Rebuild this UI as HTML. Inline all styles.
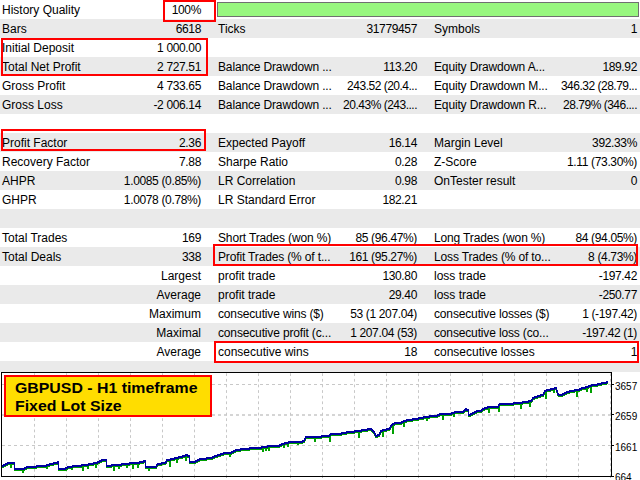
<!DOCTYPE html>
<html><head><meta charset="utf-8"><style>
html,body{margin:0;padding:0;width:640px;height:480px;overflow:hidden;background:#fff}
body{position:relative;font-family:"Liberation Sans",sans-serif;color:#000}
.bg{position:absolute;left:0;width:640px;background:#eaeaea}
.t{position:absolute;height:19px;line-height:19px;font-size:12px;white-space:pre}
.r{text-align:right}
.v{letter-spacing:-0.35px}
.ve{letter-spacing:-0.5px}
.lp{letter-spacing:-0.15px}
.rb{position:absolute;border:2px solid #ff0000}
.ax{position:absolute;left:615px;font-size:10px;line-height:12px;white-space:pre}
.yb{position:absolute;left:4px;top:375px;width:204px;height:38px;border:2px solid #ff0000;background:#ffdd00}
.yb div{position:absolute;left:8.6px;font-weight:bold;font-size:14px;line-height:16px;white-space:pre;transform:scaleX(1.133);transform-origin:0 0}
</style></head><body>
<div class="bg" style="top:19px;height:19px"></div>
<div class="bg" style="top:57px;height:19px"></div>
<div class="bg" style="top:95px;height:19px"></div>
<div class="bg" style="top:133px;height:19px"></div>
<div class="bg" style="top:171px;height:19px"></div>
<div class="bg" style="top:209px;height:19px"></div>
<div class="bg" style="top:247px;height:19px"></div>
<div class="bg" style="top:285px;height:19px"></div>
<div class="bg" style="top:323px;height:19px"></div>
<div class="bg" style="top:361px;height:11px"></div>
<div class="t" style="top:1px;left:2px">History Quality</div>
<div class="t r v" style="top:1px;right:439px">100%</div>
<div class="t" style="top:20px;left:2px">Bars</div>
<div class="t r v" style="top:20px;right:439px">6618</div>
<div class="t" style="top:20px;left:218px">Ticks</div>
<div class="t r v" style="top:20px;right:223px">31779457</div>
<div class="t" style="top:20px;left:434px">Symbols</div>
<div class="t r v" style="top:20px;right:3px">1</div>
<div class="t" style="top:39px;left:2px">Initial Deposit</div>
<div class="t r v" style="top:39px;right:439px">1 000.00</div>
<div class="t" style="top:58px;left:2px">Total Net Profit</div>
<div class="t r v" style="top:58px;right:439px">2 727.51</div>
<div class="t lp" style="top:58px;left:218px">Balance Drawdown ...</div>
<div class="t r v" style="top:58px;right:223px">113.20</div>
<div class="t lp" style="top:58px;left:434px">Equity Drawdown A...</div>
<div class="t r v" style="top:58px;right:3px">189.92</div>
<div class="t" style="top:77px;left:2px">Gross Profit</div>
<div class="t r v" style="top:77px;right:439px">4 733.65</div>
<div class="t lp" style="top:77px;left:218px">Balance Drawdown ...</div>
<div class="t r v ve" style="top:77px;right:223px">243.52 (20.4...</div>
<div class="t lp" style="top:77px;left:434px">Equity Drawdown M...</div>
<div class="t r v ve" style="top:77px;right:3px">346.32 (28.79...</div>
<div class="t" style="top:96px;left:2px">Gross Loss</div>
<div class="t r v" style="top:96px;right:439px">-2 006.14</div>
<div class="t lp" style="top:96px;left:218px">Balance Drawdown ...</div>
<div class="t r v ve" style="top:96px;right:223px">20.43% (243....</div>
<div class="t lp" style="top:96px;left:434px">Equity Drawdown R...</div>
<div class="t r v ve" style="top:96px;right:3px">28.79% (346....</div>
<div class="t" style="top:134px;left:2px">Profit Factor</div>
<div class="t r v" style="top:134px;right:439px">2.36</div>
<div class="t" style="top:134px;left:218px">Expected Payoff</div>
<div class="t r v" style="top:134px;right:223px">16.14</div>
<div class="t" style="top:134px;left:434px">Margin Level</div>
<div class="t r v" style="top:134px;right:3px">392.33%</div>
<div class="t" style="top:153px;left:2px">Recovery Factor</div>
<div class="t r v" style="top:153px;right:439px">7.88</div>
<div class="t" style="top:153px;left:218px">Sharpe Ratio</div>
<div class="t r v" style="top:153px;right:223px">0.28</div>
<div class="t" style="top:153px;left:434px">Z-Score</div>
<div class="t r v" style="top:153px;right:3px">1.11 (73.30%)</div>
<div class="t" style="top:172px;left:2px">AHPR</div>
<div class="t r v" style="top:172px;right:439px">1.0085 (0.85%)</div>
<div class="t" style="top:172px;left:218px">LR Correlation</div>
<div class="t r v" style="top:172px;right:223px">0.98</div>
<div class="t" style="top:172px;left:434px">OnTester result</div>
<div class="t r v" style="top:172px;right:3px">0</div>
<div class="t" style="top:191px;left:2px">GHPR</div>
<div class="t r v" style="top:191px;right:439px">1.0078 (0.78%)</div>
<div class="t" style="top:191px;left:218px">LR Standard Error</div>
<div class="t r v" style="top:191px;right:223px">182.21</div>
<div class="t" style="top:229px;left:2px">Total Trades</div>
<div class="t r v" style="top:229px;right:439px">169</div>
<div class="t lp" style="top:229px;left:218px">Short Trades (won %)</div>
<div class="t r v" style="top:229px;right:223px">85 (96.47%)</div>
<div class="t lp" style="top:229px;left:434px">Long Trades (won %)</div>
<div class="t r v" style="top:229px;right:3px">84 (94.05%)</div>
<div class="t" style="top:248px;left:2px">Total Deals</div>
<div class="t r v" style="top:248px;right:439px">338</div>
<div class="t lp" style="top:248px;left:218px">Profit Trades (% of t...</div>
<div class="t r v" style="top:248px;right:223px">161 (95.27%)</div>
<div class="t lp" style="top:248px;left:434px">Loss Trades (% of to...</div>
<div class="t r v" style="top:248px;right:3px">8 (4.73%)</div>
<div class="t r" style="top:267px;right:439px">Largest</div>
<div class="t" style="top:267px;left:218px">profit trade</div>
<div class="t r v" style="top:267px;right:223px">130.80</div>
<div class="t" style="top:267px;left:434px">loss trade</div>
<div class="t r v" style="top:267px;right:3px">-197.42</div>
<div class="t r" style="top:286px;right:439px">Average</div>
<div class="t" style="top:286px;left:218px">profit trade</div>
<div class="t r v" style="top:286px;right:223px">29.40</div>
<div class="t" style="top:286px;left:434px">loss trade</div>
<div class="t r v" style="top:286px;right:3px">-250.77</div>
<div class="t r" style="top:305px;right:439px">Maximum</div>
<div class="t lp" style="top:305px;left:218px">consecutive wins ($)</div>
<div class="t r v" style="top:305px;right:223px">53 (1 207.04)</div>
<div class="t lp" style="top:305px;left:434px">consecutive losses ($)</div>
<div class="t r v" style="top:305px;right:3px">1 (-197.42)</div>
<div class="t r" style="top:324px;right:439px">Maximal</div>
<div class="t lp" style="top:324px;left:218px">consecutive profit (c...</div>
<div class="t r v" style="top:324px;right:223px">1 207.04 (53)</div>
<div class="t lp" style="top:324px;left:434px">consecutive loss (co...</div>
<div class="t r v" style="top:324px;right:3px">-197.42 (1)</div>
<div class="t r" style="top:343px;right:439px">Average</div>
<div class="t" style="top:343px;left:218px">consecutive wins</div>
<div class="t r v" style="top:343px;right:223px">18</div>
<div class="t" style="top:343px;left:434px">consecutive losses</div>
<div class="t r v" style="top:343px;right:3px">1</div>
<div style="position:absolute;left:217px;top:2px;width:420px;height:13px;border:1px solid #707070;background:#98f77f"></div>
<div class="rb" style="left:163px;top:0px;width:49px;height:18px"></div>
<div class="rb" style="left:1px;top:38px;width:203px;height:34px"></div>
<div class="rb" style="left:1px;top:129px;width:201px;height:18px"></div>
<div class="rb" style="left:213px;top:244px;width:421px;height:18px"></div>
<div class="rb" style="left:214px;top:341px;width:421px;height:18px"></div>
<svg width="640" height="480" style="position:absolute;left:0;top:0" shape-rendering="crispEdges"><rect x="1" y="372" width="611" height="105" fill="#fff"/><path d="M34.5 373.25V476 M66.5 373.25V476 M98.5 373.25V476 M130.5 373.25V476 M162.5 373.25V476 M194.5 373.25V476 M226.5 373.25V476 M258.5 373.25V476 M290.5 373.25V476 M322.5 373.25V476 M354.5 373.25V476 M386.5 373.25V476 M418.5 373.25V476 M450.5 373.25V476 M482.5 373.25V476 M514.5 373.25V476 M546.5 373.25V476 M578.5 373.25V476 M610.5 373.25V476" stroke="#c8c8c8" stroke-width="1" stroke-dasharray="2.8 2.825" fill="none" shape-rendering="auto"/><path d="M2 384.5H611 M2 445.5H611" stroke="#c8c8c8" stroke-width="1" stroke-dasharray="3 3" fill="none"/><path d="M2 415H611" stroke="#c8c8c8" stroke-width="1.6" stroke-dasharray="3 3" fill="none" shape-rendering="geometricPrecision"/><path d="M2 467h1v1h-1zM3 467h1v1h-1zM4 466h1v1h-1zM5 466h1v1h-1zM6 465h1v1h-1zM7 465h1v1h-1zM8 464h1v1h-1zM9 464h1v1h-1zM10 464h1v4h-1zM11 464h1v4h-1zM12 464h1v1h-1zM13 464h1v1h-1zM14 470h1v1h-1zM15 470h1v1h-1zM16 470h1v1h-1zM17 470h1v1h-1zM18 470h1v1h-1zM19 470h1v1h-1zM20 470h1v1h-1zM21 470h1v1h-1zM22 470h1v3h-1zM23 470h1v3h-1zM24 470h1v1h-1zM25 469h1v1h-1zM26 469h1v1h-1zM27 468h1v1h-1zM28 468h1v1h-1zM29 468h1v1h-1zM30 468h1v1h-1zM31 468h1v1h-1zM32 468h1v1h-1zM33 468h1v1h-1zM34 468h1v1h-1zM35 468h1v1h-1zM36 468h1v1h-1zM37 467h1v1h-1zM38 467h1v1h-1zM39 467h1v1h-1zM40 467h1v1h-1zM41 467h1v1h-1zM42 467h1v1h-1zM43 467h1v1h-1zM44 467h1v1h-1zM45 467h1v1h-1zM46 467h1v2h-1zM47 466h1v3h-1zM48 466h1v1h-1zM49 466h1v1h-1zM50 465h1v1h-1zM51 465h1v1h-1zM52 465h1v1h-1zM53 465h1v1h-1zM54 464h1v1h-1zM55 464h1v1h-1zM56 464h1v1h-1zM57 464h1v1h-1zM58 470h1v1h-1zM59 470h1v1h-1zM60 470h1v1h-1zM61 470h1v1h-1zM62 470h1v1h-1zM63 470h1v1h-1zM64 470h1v1h-1zM65 470h1v1h-1zM66 469h1v2h-1zM67 469h1v1h-1zM68 468h1v1h-1zM69 468h1v1h-1zM70 468h1v1h-1zM71 468h1v2h-1zM72 468h1v2h-1zM73 467h1v1h-1zM74 467h1v1h-1zM75 467h1v1h-1zM76 467h1v1h-1zM77 467h1v1h-1zM78 467h1v1h-1zM79 467h1v1h-1zM80 467h1v1h-1zM81 467h1v1h-1zM82 466h1v5h-1zM83 466h1v5h-1zM84 466h1v1h-1zM85 466h1v1h-1zM86 466h1v1h-1zM87 466h1v3h-1zM88 466h1v3h-1zM89 465h1v1h-1zM90 465h1v1h-1zM91 465h1v1h-1zM92 465h1v1h-1zM93 465h1v1h-1zM94 464h1v1h-1zM95 464h1v4h-1zM96 464h1v4h-1zM97 464h1v1h-1zM98 463h1v1h-1zM99 463h1v1h-1zM100 462h1v1h-1zM101 462h1v1h-1zM102 461h1v1h-1zM103 461h1v1h-1zM104 461h1v1h-1zM105 461h1v1h-1zM106 467h1v1h-1zM107 467h1v1h-1zM108 467h1v1h-1zM109 467h1v1h-1zM110 467h1v1h-1zM111 467h1v1h-1zM112 466h1v1h-1zM113 466h1v5h-1zM114 466h1v5h-1zM115 466h1v1h-1zM116 466h1v1h-1zM117 466h1v1h-1zM118 466h1v3h-1zM119 466h1v3h-1zM120 466h1v1h-1zM121 466h1v1h-1zM122 465h1v1h-1zM123 465h1v1h-1zM124 465h1v1h-1zM125 465h1v1h-1zM126 465h1v3h-1zM127 465h1v3h-1zM128 465h1v1h-1zM129 465h1v1h-1zM130 464h1v1h-1zM131 464h1v1h-1zM132 464h1v5h-1zM133 464h1v5h-1zM134 464h1v1h-1zM135 464h1v1h-1zM136 464h1v1h-1zM137 464h1v4h-1zM138 464h1v4h-1zM139 464h1v1h-1zM140 463h1v1h-1zM141 463h1v1h-1zM142 463h1v1h-1zM143 463h1v1h-1zM144 462h1v1h-1zM145 468h1v1h-1zM146 468h1v1h-1zM147 468h1v1h-1zM148 468h1v3h-1zM149 468h1v3h-1zM150 468h1v1h-1zM151 468h1v1h-1zM152 468h1v1h-1zM153 468h1v1h-1zM154 468h1v1h-1zM155 468h1v1h-1zM156 468h1v1h-1zM157 466h1v1h-1zM158 465h1v1h-1zM159 465h1v1h-1zM160 465h1v1h-1zM161 465h1v1h-1zM162 464h1v1h-1zM163 464h1v1h-1zM164 464h1v1h-1zM165 464h1v1h-1zM166 463h1v1h-1zM167 461h1v1h-1zM168 461h1v1h-1zM169 461h1v6h-1zM170 461h1v6h-1zM171 460h1v1h-1zM172 460h1v1h-1zM173 460h1v1h-1zM174 460h1v1h-1zM175 459h1v1h-1zM176 459h1v4h-1zM177 459h1v4h-1zM178 459h1v1h-1zM179 458h1v1h-1zM180 458h1v1h-1zM181 458h1v1h-1zM182 458h1v1h-1zM183 457h1v1h-1zM184 457h1v1h-1zM185 457h1v4h-1zM186 456h1v5h-1zM187 457h1v1h-1zM188 457h1v1h-1zM189 463h1v1h-1zM190 463h1v1h-1zM191 463h1v1h-1zM192 463h1v1h-1zM193 463h1v1h-1zM194 463h1v1h-1zM195 463h1v1h-1zM196 462h1v1h-1zM197 462h1v1h-1zM198 461h1v1h-1zM199 461h1v1h-1zM200 460h1v1h-1zM201 460h1v1h-1zM202 460h1v1h-1zM203 460h1v1h-1zM204 460h1v1h-1zM205 460h1v1h-1zM206 460h1v1h-1zM207 459h1v1h-1zM208 459h1v1h-1zM209 459h1v1h-1zM210 459h1v1h-1zM211 459h1v1h-1zM212 459h1v1h-1zM213 458h1v1h-1zM214 458h1v1h-1zM215 457h1v1h-1zM216 457h1v1h-1zM217 457h1v1h-1zM218 456h1v1h-1zM219 456h1v1h-1zM220 456h1v1h-1zM221 455h1v1h-1zM222 455h1v1h-1zM223 455h1v1h-1zM224 454h1v1h-1zM225 454h1v1h-1zM226 454h1v1h-1zM227 454h1v1h-1zM228 454h1v1h-1zM229 454h1v3h-1zM230 454h1v3h-1zM231 454h1v1h-1zM232 453h1v1h-1zM233 453h1v1h-1zM234 452h1v1h-1zM235 452h1v1h-1zM236 451h1v1h-1zM237 451h1v1h-1zM238 451h1v1h-1zM239 451h1v1h-1zM240 451h1v1h-1zM241 450h1v1h-1zM242 450h1v1h-1zM243 450h1v1h-1zM244 450h1v1h-1zM245 450h1v1h-1zM246 450h1v1h-1zM247 450h1v1h-1zM248 450h1v1h-1zM249 450h1v1h-1zM250 449h1v1h-1zM251 449h1v1h-1zM252 449h1v1h-1zM253 449h1v1h-1zM254 449h1v1h-1zM255 449h1v1h-1zM256 449h1v1h-1zM257 449h1v1h-1zM258 449h1v1h-1zM259 449h1v1h-1zM260 449h1v1h-1zM261 449h1v1h-1zM262 448h1v4h-1zM263 448h1v4h-1zM264 448h1v1h-1zM265 448h1v3h-1zM266 448h1v3h-1zM267 448h1v1h-1zM268 447h1v4h-1zM269 447h1v4h-1zM270 447h1v1h-1zM271 447h1v1h-1zM272 447h1v1h-1zM273 447h1v1h-1zM274 447h1v1h-1zM275 447h1v1h-1zM276 447h1v1h-1zM277 447h1v1h-1zM278 447h1v1h-1zM279 447h1v1h-1zM280 446h1v1h-1zM281 446h1v1h-1zM282 445h1v1h-1zM283 445h1v3h-1zM284 445h1v3h-1zM285 444h1v1h-1zM286 444h1v1h-1zM287 444h1v3h-1zM288 444h1v3h-1zM289 443h1v1h-1zM290 443h1v1h-1zM291 443h1v1h-1zM292 443h1v1h-1zM293 443h1v1h-1zM294 443h1v1h-1zM295 443h1v1h-1zM296 443h1v1h-1zM297 443h1v2h-1zM298 443h1v2h-1zM299 443h1v1h-1zM300 443h1v1h-1zM301 443h1v1h-1zM302 443h1v1h-1zM303 442h1v1h-1zM304 442h1v1h-1zM305 440h1v1h-1zM306 438h1v1h-1zM307 438h1v1h-1zM308 438h1v1h-1zM309 438h1v1h-1zM310 438h1v1h-1zM311 438h1v1h-1zM312 438h1v1h-1zM313 438h1v1h-1zM314 438h1v4h-1zM315 438h1v4h-1zM316 438h1v1h-1zM317 438h1v1h-1zM318 438h1v1h-1zM319 438h1v1h-1zM320 438h1v1h-1zM321 438h1v1h-1zM322 437h1v1h-1zM323 437h1v1h-1zM324 437h1v1h-1zM325 437h1v1h-1zM326 437h1v1h-1zM327 437h1v1h-1zM328 437h1v1h-1zM329 437h1v5h-1zM330 436h1v6h-1zM331 435h1v1h-1zM332 435h1v1h-1zM333 435h1v1h-1zM334 435h1v1h-1zM335 435h1v1h-1zM336 435h1v1h-1zM337 435h1v1h-1zM338 435h1v1h-1zM339 435h1v1h-1zM340 435h1v1h-1zM341 435h1v1h-1zM342 434h1v1h-1zM343 434h1v1h-1zM344 434h1v1h-1zM345 434h1v1h-1zM346 434h1v1h-1zM347 433h1v1h-1zM348 433h1v1h-1zM349 433h1v1h-1zM350 433h1v1h-1zM351 433h1v1h-1zM352 433h1v1h-1zM353 433h1v1h-1zM354 433h1v1h-1zM355 432h1v1h-1zM356 432h1v1h-1zM357 432h1v1h-1zM358 432h1v6h-1zM359 432h1v6h-1zM360 432h1v1h-1zM361 432h1v1h-1zM362 431h1v1h-1zM363 431h1v1h-1zM364 431h1v1h-1zM365 431h1v1h-1zM366 431h1v1h-1zM367 431h1v1h-1zM368 430h1v1h-1zM369 430h1v1h-1zM370 430h1v1h-1zM371 431h1v1h-1zM372 432h1v1h-1zM373 433h1v1h-1zM374 435h1v1h-1zM375 437h1v1h-1zM376 437h1v1h-1zM377 437h1v1h-1zM378 436h1v1h-1zM379 436h1v1h-1zM380 434h1v1h-1zM381 432h1v1h-1zM382 432h1v5h-1zM383 431h1v6h-1zM384 431h1v1h-1zM385 431h1v1h-1zM386 431h1v1h-1zM387 430h1v1h-1zM388 430h1v1h-1zM389 430h1v1h-1zM390 429h1v1h-1zM391 427h1v1h-1zM392 426h1v8h-1zM393 425h1v9h-1zM394 425h1v1h-1zM395 424h1v1h-1zM396 424h1v1h-1zM397 424h1v1h-1zM398 424h1v1h-1zM399 424h1v1h-1zM400 424h1v1h-1zM401 424h1v1h-1zM402 423h1v1h-1zM403 423h1v4h-1zM404 422h1v5h-1zM405 422h1v1h-1zM406 422h1v1h-1zM407 421h1v1h-1zM408 421h1v1h-1zM409 421h1v1h-1zM410 421h1v1h-1zM411 421h1v1h-1zM412 421h1v1h-1zM413 420h1v1h-1zM414 420h1v1h-1zM415 420h1v1h-1zM416 420h1v1h-1zM417 420h1v1h-1zM418 420h1v1h-1zM419 419h1v1h-1zM420 419h1v1h-1zM421 419h1v1h-1zM422 419h1v1h-1zM423 419h1v1h-1zM424 418h1v1h-1zM425 418h1v1h-1zM426 418h1v3h-1zM427 418h1v3h-1zM428 418h1v1h-1zM429 418h1v1h-1zM430 417h1v1h-1zM431 417h1v1h-1zM432 417h1v1h-1zM433 417h1v1h-1zM434 417h1v1h-1zM435 417h1v1h-1zM436 417h1v1h-1zM437 417h1v1h-1zM438 416h1v1h-1zM439 416h1v1h-1zM440 415h1v1h-1zM441 415h1v1h-1zM442 415h1v5h-1zM443 415h1v5h-1zM444 415h1v1h-1zM445 415h1v1h-1zM446 415h1v1h-1zM447 415h1v1h-1zM448 415h1v1h-1zM449 415h1v1h-1zM450 415h1v1h-1zM451 415h1v1h-1zM452 414h1v1h-1zM453 414h1v3h-1zM454 414h1v3h-1zM455 413h1v1h-1zM456 413h1v1h-1zM457 413h1v1h-1zM458 413h1v1h-1zM459 413h1v1h-1zM460 413h1v1h-1zM461 413h1v1h-1zM462 413h1v1h-1zM463 413h1v1h-1zM464 412h1v1h-1zM465 411h1v1h-1zM466 411h1v1h-1zM467 411h1v1h-1zM468 416h1v1h-1zM469 416h1v1h-1zM470 416h1v1h-1zM471 415h1v1h-1zM472 415h1v1h-1zM473 414h1v1h-1zM474 414h1v1h-1zM475 413h1v1h-1zM476 413h1v1h-1zM477 412h1v1h-1zM478 412h1v1h-1zM479 412h1v1h-1zM480 412h1v1h-1zM481 412h1v1h-1zM482 411h1v1h-1zM483 410h1v1h-1zM484 410h1v1h-1zM485 409h1v1h-1zM486 409h1v1h-1zM487 409h1v1h-1zM488 408h1v5h-1zM489 408h1v5h-1zM490 408h1v1h-1zM491 408h1v1h-1zM492 408h1v1h-1zM493 408h1v1h-1zM494 408h1v1h-1zM495 408h1v1h-1zM496 408h1v1h-1zM497 408h1v1h-1zM498 408h1v4h-1zM499 406h1v6h-1zM500 405h1v1h-1zM501 405h1v1h-1zM502 405h1v1h-1zM503 405h1v1h-1zM504 405h1v1h-1zM505 405h1v1h-1zM506 405h1v1h-1zM507 405h1v1h-1zM508 405h1v1h-1zM509 405h1v1h-1zM510 405h1v1h-1zM511 405h1v1h-1zM512 405h1v1h-1zM513 405h1v1h-1zM514 404h1v1h-1zM515 404h1v1h-1zM516 404h1v1h-1zM517 404h1v1h-1zM518 404h1v1h-1zM519 404h1v1h-1zM520 404h1v5h-1zM521 404h1v5h-1zM522 404h1v1h-1zM523 403h1v1h-1zM524 403h1v1h-1zM525 403h1v1h-1zM526 403h1v1h-1zM527 403h1v1h-1zM528 403h1v1h-1zM529 402h1v5h-1zM530 402h1v5h-1zM531 402h1v1h-1zM532 401h1v1h-1zM533 399h1v1h-1zM534 399h1v1h-1zM535 398h1v1h-1zM536 398h1v1h-1zM537 398h1v1h-1zM538 397h1v1h-1zM539 397h1v1h-1zM540 397h1v1h-1zM541 396h1v1h-1zM542 396h1v1h-1zM543 396h1v1h-1zM544 394h1v1h-1zM545 392h1v7h-1zM546 392h1v7h-1zM547 391h1v1h-1zM548 391h1v1h-1zM549 391h1v1h-1zM550 391h1v1h-1zM551 390h1v1h-1zM552 390h1v1h-1zM553 390h1v3h-1zM554 390h1v3h-1zM555 389h1v1h-1zM556 392h1v1h-1zM557 395h1v1h-1zM558 396h1v1h-1zM559 396h1v1h-1zM560 396h1v1h-1zM561 396h1v1h-1zM562 396h1v1h-1zM563 395h1v1h-1zM564 395h1v1h-1zM565 394h1v1h-1zM566 394h1v1h-1zM567 393h1v1h-1zM568 393h1v1h-1zM569 393h1v1h-1zM570 392h1v1h-1zM571 392h1v1h-1zM572 392h1v1h-1zM573 392h1v1h-1zM574 392h1v1h-1zM575 391h1v1h-1zM576 391h1v6h-1zM577 391h1v6h-1zM578 391h1v1h-1zM579 391h1v1h-1zM580 390h1v1h-1zM581 390h1v1h-1zM582 389h1v1h-1zM583 389h1v1h-1zM584 389h1v1h-1zM585 389h1v1h-1zM586 388h1v4h-1zM587 388h1v4h-1zM588 388h1v1h-1zM589 387h1v1h-1zM590 387h1v6h-1zM591 387h1v6h-1zM592 386h1v1h-1zM593 386h1v1h-1zM594 386h1v1h-1zM595 386h1v1h-1zM596 386h1v1h-1zM597 386h1v1h-1zM598 385h1v1h-1zM599 385h1v1h-1zM600 385h1v1h-1zM601 385h1v1h-1zM602 384h1v1h-1zM603 384h1v1h-1zM604 384h1v1h-1zM605 384h1v1h-1zM606 384h1v1h-1zM607 383h1v1h-1z" fill="#00a000"/><path d="M2 465h1v2h-1zM3 464h1v3h-1zM4 464h1v2h-1zM5 463h1v3h-1zM6 463h1v2h-1zM7 462h1v3h-1zM8 462h1v2h-1zM9 462h1v2h-1zM10 462h1v2h-1zM11 462h1v2h-1zM12 462h1v2h-1zM13 462h1v2h-1zM14 462h1v8h-1zM15 468h1v2h-1zM16 468h1v2h-1zM17 468h1v2h-1zM18 468h1v2h-1zM19 468h1v2h-1zM20 468h1v2h-1zM21 468h1v2h-1zM22 468h1v2h-1zM23 468h1v2h-1zM24 467h1v3h-1zM25 467h1v2h-1zM26 466h1v3h-1zM27 466h1v2h-1zM28 466h1v2h-1zM29 466h1v2h-1zM30 466h1v2h-1zM31 466h1v2h-1zM32 466h1v2h-1zM33 466h1v2h-1zM34 466h1v2h-1zM35 466h1v2h-1zM36 465h1v3h-1zM37 465h1v2h-1zM38 465h1v2h-1zM39 465h1v2h-1zM40 465h1v2h-1zM41 465h1v2h-1zM42 465h1v2h-1zM43 465h1v2h-1zM44 465h1v2h-1zM45 465h1v2h-1zM46 464h1v3h-1zM47 464h1v2h-1zM48 464h1v2h-1zM49 463h1v3h-1zM50 463h1v2h-1zM51 463h1v2h-1zM52 463h1v2h-1zM53 462h1v3h-1zM54 462h1v2h-1zM55 462h1v2h-1zM56 462h1v2h-1zM57 461h1v3h-1zM58 461h1v9h-1zM59 468h1v2h-1zM60 468h1v2h-1zM61 468h1v2h-1zM62 468h1v2h-1zM63 468h1v2h-1zM64 468h1v2h-1zM65 467h1v3h-1zM66 467h1v2h-1zM67 466h1v3h-1zM68 466h1v2h-1zM69 466h1v2h-1zM70 466h1v2h-1zM71 466h1v2h-1zM72 465h1v3h-1zM73 465h1v2h-1zM74 465h1v2h-1zM75 465h1v2h-1zM76 465h1v2h-1zM77 465h1v2h-1zM78 465h1v2h-1zM79 465h1v2h-1zM80 465h1v2h-1zM81 464h1v3h-1zM82 464h1v2h-1zM83 464h1v2h-1zM84 464h1v2h-1zM85 464h1v2h-1zM86 464h1v2h-1zM87 464h1v2h-1zM88 463h1v3h-1zM89 463h1v2h-1zM90 463h1v2h-1zM91 463h1v2h-1zM92 463h1v2h-1zM93 462h1v3h-1zM94 462h1v2h-1zM95 462h1v2h-1zM96 462h1v2h-1zM97 461h1v3h-1zM98 461h1v2h-1zM99 460h1v3h-1zM100 460h1v2h-1zM101 459h1v3h-1zM102 459h1v2h-1zM103 459h1v2h-1zM104 459h1v2h-1zM105 459h1v2h-1zM106 459h1v8h-1zM107 465h1v2h-1zM108 465h1v2h-1zM109 465h1v2h-1zM110 465h1v2h-1zM111 464h1v3h-1zM112 464h1v2h-1zM113 464h1v2h-1zM114 464h1v2h-1zM115 464h1v2h-1zM116 464h1v2h-1zM117 464h1v2h-1zM118 464h1v2h-1zM119 464h1v2h-1zM120 464h1v2h-1zM121 463h1v3h-1zM122 463h1v2h-1zM123 463h1v2h-1zM124 463h1v2h-1zM125 463h1v2h-1zM126 463h1v2h-1zM127 463h1v2h-1zM128 463h1v2h-1zM129 462h1v3h-1zM130 462h1v2h-1zM131 462h1v2h-1zM132 462h1v2h-1zM133 462h1v2h-1zM134 462h1v2h-1zM135 462h1v2h-1zM136 462h1v2h-1zM137 462h1v2h-1zM138 462h1v2h-1zM139 461h1v3h-1zM140 461h1v2h-1zM141 461h1v2h-1zM142 461h1v2h-1zM143 460h1v3h-1zM144 460h1v2h-1zM145 460h1v8h-1zM146 466h1v2h-1zM147 466h1v2h-1zM148 466h1v2h-1zM149 466h1v2h-1zM150 466h1v2h-1zM151 466h1v2h-1zM152 466h1v2h-1zM153 466h1v2h-1zM154 466h1v2h-1zM155 466h1v2h-1zM156 464h1v4h-1zM157 463h1v3h-1zM158 463h1v2h-1zM159 463h1v2h-1zM160 463h1v2h-1zM161 462h1v3h-1zM162 462h1v2h-1zM163 462h1v2h-1zM164 462h1v2h-1zM165 461h1v3h-1zM166 459h1v4h-1zM167 459h1v2h-1zM168 459h1v2h-1zM169 459h1v2h-1zM170 458h1v3h-1zM171 458h1v2h-1zM172 458h1v2h-1zM173 458h1v2h-1zM174 457h1v3h-1zM175 457h1v2h-1zM176 457h1v2h-1zM177 457h1v2h-1zM178 456h1v3h-1zM179 456h1v2h-1zM180 456h1v2h-1zM181 456h1v2h-1zM182 455h1v3h-1zM183 455h1v2h-1zM184 455h1v2h-1zM185 454h1v3h-1zM186 454h1v2h-1zM187 454h1v3h-1zM188 455h1v2h-1zM189 455h1v8h-1zM190 461h1v2h-1zM191 461h1v2h-1zM192 461h1v2h-1zM193 461h1v2h-1zM194 461h1v2h-1zM195 460h1v3h-1zM196 460h1v2h-1zM197 459h1v3h-1zM198 459h1v2h-1zM199 458h1v3h-1zM200 458h1v2h-1zM201 458h1v2h-1zM202 458h1v2h-1zM203 458h1v2h-1zM204 458h1v2h-1zM205 458h1v2h-1zM206 457h1v3h-1zM207 457h1v2h-1zM208 457h1v2h-1zM209 457h1v2h-1zM210 457h1v2h-1zM211 457h1v2h-1zM212 456h1v3h-1zM213 456h1v2h-1zM214 455h1v3h-1zM215 455h1v2h-1zM216 455h1v2h-1zM217 454h1v3h-1zM218 454h1v2h-1zM219 454h1v2h-1zM220 453h1v3h-1zM221 453h1v2h-1zM222 453h1v2h-1zM223 452h1v3h-1zM224 452h1v2h-1zM225 452h1v2h-1zM226 452h1v2h-1zM227 452h1v2h-1zM228 452h1v2h-1zM229 452h1v2h-1zM230 452h1v2h-1zM231 451h1v3h-1zM232 451h1v2h-1zM233 450h1v3h-1zM234 450h1v2h-1zM235 449h1v3h-1zM236 449h1v2h-1zM237 449h1v2h-1zM238 449h1v2h-1zM239 449h1v2h-1zM240 448h1v3h-1zM241 448h1v2h-1zM242 448h1v2h-1zM243 448h1v2h-1zM244 448h1v2h-1zM245 448h1v2h-1zM246 448h1v2h-1zM247 448h1v2h-1zM248 448h1v2h-1zM249 447h1v3h-1zM250 447h1v2h-1zM251 447h1v2h-1zM252 447h1v2h-1zM253 447h1v2h-1zM254 447h1v2h-1zM255 447h1v2h-1zM256 447h1v2h-1zM257 447h1v2h-1zM258 447h1v2h-1zM259 447h1v2h-1zM260 447h1v2h-1zM261 446h1v3h-1zM262 446h1v2h-1zM263 446h1v2h-1zM264 446h1v2h-1zM265 446h1v2h-1zM266 446h1v2h-1zM267 445h1v3h-1zM268 445h1v2h-1zM269 445h1v2h-1zM270 445h1v2h-1zM271 445h1v2h-1zM272 445h1v2h-1zM273 445h1v2h-1zM274 445h1v2h-1zM275 445h1v2h-1zM276 445h1v2h-1zM277 445h1v2h-1zM278 445h1v2h-1zM279 444h1v3h-1zM280 444h1v2h-1zM281 443h1v3h-1zM282 443h1v2h-1zM283 443h1v2h-1zM284 442h1v3h-1zM285 442h1v2h-1zM286 442h1v2h-1zM287 442h1v2h-1zM288 441h1v3h-1zM289 441h1v2h-1zM290 441h1v2h-1zM291 441h1v2h-1zM292 441h1v2h-1zM293 441h1v2h-1zM294 441h1v2h-1zM295 441h1v2h-1zM296 441h1v2h-1zM297 441h1v2h-1zM298 441h1v2h-1zM299 441h1v2h-1zM300 441h1v2h-1zM301 441h1v2h-1zM302 440h1v3h-1zM303 440h1v2h-1zM304 438h1v4h-1zM305 436h1v4h-1zM306 436h1v2h-1zM307 436h1v2h-1zM308 436h1v2h-1zM309 436h1v2h-1zM310 436h1v2h-1zM311 436h1v2h-1zM312 436h1v2h-1zM313 436h1v2h-1zM314 436h1v2h-1zM315 436h1v2h-1zM316 436h1v2h-1zM317 436h1v2h-1zM318 436h1v2h-1zM319 436h1v2h-1zM320 436h1v2h-1zM321 435h1v3h-1zM322 435h1v2h-1zM323 435h1v2h-1zM324 435h1v2h-1zM325 435h1v2h-1zM326 435h1v2h-1zM327 435h1v2h-1zM328 435h1v2h-1zM329 434h1v3h-1zM330 433h1v3h-1zM331 433h1v2h-1zM332 433h1v2h-1zM333 433h1v2h-1zM334 433h1v2h-1zM335 433h1v2h-1zM336 433h1v2h-1zM337 433h1v2h-1zM338 433h1v2h-1zM339 433h1v2h-1zM340 433h1v2h-1zM341 432h1v3h-1zM342 432h1v2h-1zM343 432h1v2h-1zM344 432h1v2h-1zM345 432h1v2h-1zM346 431h1v3h-1zM347 431h1v2h-1zM348 431h1v2h-1zM349 431h1v2h-1zM350 431h1v2h-1zM351 431h1v2h-1zM352 431h1v2h-1zM353 431h1v2h-1zM354 430h1v3h-1zM355 430h1v2h-1zM356 430h1v2h-1zM357 430h1v2h-1zM358 430h1v2h-1zM359 430h1v2h-1zM360 430h1v2h-1zM361 429h1v3h-1zM362 429h1v2h-1zM363 429h1v2h-1zM364 429h1v2h-1zM365 429h1v2h-1zM366 429h1v2h-1zM367 428h1v3h-1zM368 428h1v2h-1zM369 428h1v2h-1zM370 428h1v2h-1zM371 428h1v3h-1zM372 429h1v3h-1zM373 430h1v3h-1zM374 431h1v4h-1zM375 433h1v4h-1zM376 435h1v2h-1zM377 434h1v3h-1zM378 434h1v2h-1zM379 432h1v4h-1zM380 430h1v4h-1zM381 430h1v2h-1zM382 429h1v3h-1zM383 429h1v2h-1zM384 429h1v2h-1zM385 429h1v2h-1zM386 428h1v3h-1zM387 428h1v2h-1zM388 428h1v2h-1zM389 427h1v3h-1zM390 425h1v4h-1zM391 424h1v3h-1zM392 423h1v3h-1zM393 423h1v2h-1zM394 422h1v3h-1zM395 422h1v2h-1zM396 422h1v2h-1zM397 422h1v2h-1zM398 422h1v2h-1zM399 422h1v2h-1zM400 422h1v2h-1zM401 421h1v3h-1zM402 421h1v2h-1zM403 420h1v3h-1zM404 420h1v2h-1zM405 420h1v2h-1zM406 419h1v3h-1zM407 419h1v2h-1zM408 419h1v2h-1zM409 419h1v2h-1zM410 419h1v2h-1zM411 419h1v2h-1zM412 418h1v3h-1zM413 418h1v2h-1zM414 418h1v2h-1zM415 418h1v2h-1zM416 418h1v2h-1zM417 418h1v2h-1zM418 417h1v3h-1zM419 417h1v2h-1zM420 417h1v2h-1zM421 417h1v2h-1zM422 417h1v2h-1zM423 416h1v3h-1zM424 416h1v2h-1zM425 416h1v2h-1zM426 416h1v2h-1zM427 416h1v2h-1zM428 416h1v2h-1zM429 415h1v3h-1zM430 415h1v2h-1zM431 415h1v2h-1zM432 415h1v2h-1zM433 415h1v2h-1zM434 415h1v2h-1zM435 415h1v2h-1zM436 415h1v2h-1zM437 414h1v3h-1zM438 414h1v2h-1zM439 413h1v3h-1zM440 413h1v2h-1zM441 413h1v2h-1zM442 413h1v2h-1zM443 413h1v2h-1zM444 413h1v2h-1zM445 413h1v2h-1zM446 413h1v2h-1zM447 413h1v2h-1zM448 413h1v2h-1zM449 413h1v2h-1zM450 413h1v2h-1zM451 412h1v3h-1zM452 412h1v2h-1zM453 412h1v2h-1zM454 411h1v3h-1zM455 411h1v2h-1zM456 411h1v2h-1zM457 411h1v2h-1zM458 411h1v2h-1zM459 411h1v2h-1zM460 411h1v2h-1zM461 411h1v2h-1zM462 411h1v2h-1zM463 410h1v3h-1zM464 409h1v3h-1zM465 408h1v3h-1zM466 408h1v3h-1zM467 409h1v2h-1zM468 409h1v7h-1zM469 414h1v2h-1zM470 413h1v3h-1zM471 413h1v2h-1zM472 412h1v3h-1zM473 412h1v2h-1zM474 411h1v3h-1zM475 411h1v2h-1zM476 410h1v3h-1zM477 410h1v2h-1zM478 410h1v2h-1zM479 410h1v2h-1zM480 410h1v2h-1zM481 409h1v3h-1zM482 408h1v3h-1zM483 408h1v2h-1zM484 407h1v3h-1zM485 407h1v2h-1zM486 407h1v2h-1zM487 406h1v3h-1zM488 406h1v2h-1zM489 406h1v2h-1zM490 406h1v2h-1zM491 406h1v2h-1zM492 406h1v2h-1zM493 406h1v2h-1zM494 406h1v2h-1zM495 406h1v2h-1zM496 406h1v2h-1zM497 406h1v2h-1zM498 404h1v4h-1zM499 403h1v3h-1zM500 403h1v2h-1zM501 403h1v2h-1zM502 403h1v2h-1zM503 403h1v2h-1zM504 403h1v2h-1zM505 403h1v2h-1zM506 403h1v2h-1zM507 403h1v2h-1zM508 403h1v2h-1zM509 403h1v2h-1zM510 403h1v2h-1zM511 403h1v2h-1zM512 403h1v2h-1zM513 402h1v3h-1zM514 402h1v2h-1zM515 402h1v2h-1zM516 402h1v2h-1zM517 402h1v2h-1zM518 402h1v2h-1zM519 402h1v2h-1zM520 402h1v2h-1zM521 402h1v2h-1zM522 401h1v3h-1zM523 401h1v2h-1zM524 401h1v2h-1zM525 401h1v2h-1zM526 401h1v2h-1zM527 401h1v2h-1zM528 400h1v3h-1zM529 400h1v2h-1zM530 400h1v2h-1zM531 399h1v3h-1zM532 397h1v4h-1zM533 397h1v2h-1zM534 396h1v3h-1zM535 396h1v2h-1zM536 396h1v2h-1zM537 395h1v3h-1zM538 395h1v2h-1zM539 395h1v2h-1zM540 394h1v3h-1zM541 394h1v2h-1zM542 394h1v2h-1zM543 392h1v4h-1zM544 390h1v4h-1zM545 390h1v2h-1zM546 389h1v3h-1zM547 389h1v2h-1zM548 389h1v2h-1zM549 389h1v2h-1zM550 388h1v3h-1zM551 388h1v2h-1zM552 388h1v2h-1zM553 388h1v2h-1zM554 387h1v3h-1zM555 387h1v2h-1zM556 387h1v5h-1zM557 390h1v5h-1zM558 393h1v3h-1zM559 394h1v2h-1zM560 394h1v2h-1zM561 394h1v2h-1zM562 393h1v3h-1zM563 393h1v2h-1zM564 392h1v3h-1zM565 392h1v2h-1zM566 391h1v3h-1zM567 391h1v2h-1zM568 391h1v2h-1zM569 390h1v3h-1zM570 390h1v2h-1zM571 390h1v2h-1zM572 390h1v2h-1zM573 390h1v2h-1zM574 389h1v3h-1zM575 389h1v2h-1zM576 389h1v2h-1zM577 389h1v2h-1zM578 389h1v2h-1zM579 388h1v3h-1zM580 388h1v2h-1zM581 387h1v3h-1zM582 387h1v2h-1zM583 387h1v2h-1zM584 387h1v2h-1zM585 386h1v3h-1zM586 386h1v2h-1zM587 386h1v2h-1zM588 385h1v3h-1zM589 385h1v2h-1zM590 385h1v2h-1zM591 384h1v3h-1zM592 384h1v2h-1zM593 384h1v2h-1zM594 384h1v2h-1zM595 384h1v2h-1zM596 384h1v2h-1zM597 383h1v3h-1zM598 383h1v2h-1zM599 383h1v2h-1zM600 383h1v2h-1zM601 382h1v3h-1zM602 382h1v2h-1zM603 382h1v2h-1zM604 382h1v2h-1zM605 382h1v2h-1zM606 381h1v3h-1zM607 381h1v2h-1z" fill="#0000a0"/><rect x="1.5" y="372.5" width="610" height="104" fill="none" stroke="#000" stroke-width="1"/><path d="M34.5 477V478M66.5 477V478M98.5 477V478M130.5 477V478M162.5 477V478M194.5 477V478M226.5 477V478M258.5 477V478M290.5 477V478M322.5 477V478M354.5 477V478M386.5 477V478M418.5 477V478M450.5 477V478M482.5 477V478M514.5 477V478M546.5 477V478M578.5 477V478M610.5 477V478" stroke="#b4b4b4" stroke-width="1"/><path d="M612 384.5H613.5M612 414.5H613.5M612 445.5H613.5M612 476.5H613.5" stroke="#000" stroke-width="1"/></svg>
<div class="ax" style="top:381px">3657</div>
<div class="ax" style="top:411px">2659</div>
<div class="ax" style="top:442px">1661</div>
<div class="ax" style="top:472px">664</div>
<div class="yb"><div style="top:3px">GBPUSD - H1 timeframe</div><div style="top:21px">Fixed Lot Size</div></div>
</body></html>
